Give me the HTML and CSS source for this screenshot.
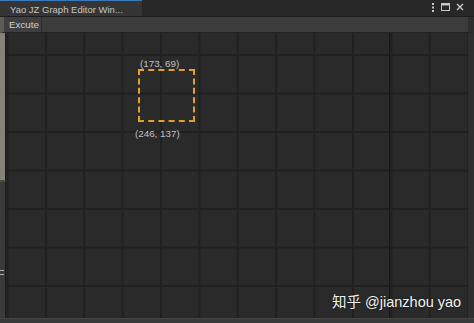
FILE: index.html
```html
<!DOCTYPE html>
<html lang="en">
<head>
    <meta charset="UTF-8">
    <meta name="viewport" content="width=device-width, initial-scale=1.0">
    <title>Yao JZ Graph Editor Window</title>
    <link rel="stylesheet" href="styles.css">
</head>
<body>
    <div class="window">
        <!-- Title bar with the dock tab -->
        <div class="titlebar">
            <div class="tab">Yao JZ Graph Editor Win...</div>
            <div class="win-icons">
                <svg width="4" height="9" viewBox="0 0 4 9">
                    <rect x="1" y="0" width="2" height="2" fill="#c8c8c8"/>
                    <rect x="1" y="3.5" width="2" height="2" fill="#c8c8c8"/>
                    <rect x="1" y="7" width="2" height="2" fill="#c8c8c8"/>
                </svg>
                <svg width="9" height="8" viewBox="0 0 9 8">
                    <rect x="0.5" y="0.5" width="8" height="7" fill="none" stroke="#c8c8c8"/>
                    <rect x="0.5" y="0.5" width="8" height="2" fill="#c8c8c8"/>
                </svg>
                <svg width="8" height="8" viewBox="0 0 8 8">
                    <path d="M1 1 L7 7 M7 1 L1 7" stroke="#c8c8c8" stroke-width="1.4"/>
                </svg>
            </div>
        </div>

        <!-- Toolbar -->
        <div class="toolbar">
            <button class="tool-btn">Excute</button>
        </div>

        <!-- Graph area -->
        <div class="main">
            <div class="side-strip">
                <div class="side-top"></div>
                <div class="side-bottom"><span class="side-mark"></span></div>
            </div>
            <div class="graph">
                <div class="coord coord-start">(173, 69)</div>
                <div class="selection"></div>
                <div class="coord coord-end">(246, 137)</div>
                <div class="watermark">知乎 @jianzhou yao</div>
            </div>
            <div class="right-strip"></div>
        </div>
        <div class="bottom-strip"></div>
    </div>
</body>
</html>
```

FILE: styles.css
```css
* {
    box-sizing: border-box;
}

body {
    margin: 0;
    width: 474px;
    height: 323px;
    overflow: hidden;
    background: #282828;
    font-family: "Liberation Sans", Arial, sans-serif;
}

.window {
    display: flex;
    flex-direction: column;
    height: 323px;
}

.titlebar {
    display: flex;
    align-items: stretch;
    height: 17px;
    background: #282828;
    border-bottom: 1px solid #1c1c1c;
}

.tab {
    width: 142px;
    padding: 3px 0 0 10px;
    background: #353535;
    border-top: 1px solid #3a79bb;
    color: #c4c4c4;
    font-size: 9.5px;
    white-space: nowrap;
}

.win-icons {
    margin-left: auto;
    display: flex;
    align-items: center;
    gap: 6px;
    padding: 0 10px 2px 0;
}

.toolbar {
    display: flex;
    height: 16px;
    background: #3c3c3c;
    border-left: 4px solid #5c5b57;
    border-right: 6px solid #2e2e2e;
    border-bottom: 1px solid #232323;
}

.tool-btn {
    width: 38px;
    padding: 0 0 0 5px;
    border: none;
    border-right: 1px solid #2c2c2c;
    background: #3f3f3f;
    color: #d2d2d2;
    font-family: inherit;
    font-size: 9.8px;
    text-align: left;
}

.main {
    flex: 1;
    display: flex;
}

.side-strip {
    width: 6px;
    display: flex;
    flex-direction: column;
}

.side-top {
    height: 147px;
    background: #858378;
    border-right: 1px solid #1a1a1a;
}

.side-bottom {
    flex: 1;
    background: #3a3a3a;
    border-top: 2px solid #4a4a4a;
    border-right: 1px solid #1a1a1a;
    position: relative;
}

.side-mark {
    position: absolute;
    top: 88px;
    left: 0;
    width: 4px;
    height: 5px;
    border-top: 1px solid #b0b0b0;
    border-bottom: 1px solid #b0b0b0;
}

.graph {
    flex: 1;
    position: relative;
    background-color: #2a2a2a;
    background-image:
        linear-gradient(90deg, #141414 1.5px, transparent 1.5px),
        linear-gradient(90deg, #202020 2px, transparent 2px),
        linear-gradient(180deg, #202020 2px, transparent 2px);
    background-size: 384px 100%, 38.4px 100%, 100% 38.5px;
    background-position: 383px 0, 0.5px 0, 0 21px;
}

.right-strip {
    width: 6px;
    background: #2f2f2f;
}

.bottom-strip {
    height: 5px;
    background: #3a3a3a;
    border-top: 1px solid #454545;
}

.selection {
    position: absolute;
    left: 132px;
    top: 36px;
    width: 57px;
    height: 53px;
    border: 2px dashed #e3a12a;
}

.coord {
    position: absolute;
    color: #c0c0c0;
    font-size: 9.8px;
    white-space: nowrap;
}

.coord-start {
    left: 134px;
    top: 25px;
}

.coord-end {
    left: 129px;
    top: 95px;
}

.watermark {
    position: absolute;
    left: 326px;
    top: 257px;
    color: #f2f2f2;
    font-family: "Liberation Sans", "Noto Sans CJK SC", sans-serif;
    font-size: 14.5px;
    white-space: nowrap;
    text-shadow: 0 0 2px rgba(0, 0, 0, 0.6);
}
```
